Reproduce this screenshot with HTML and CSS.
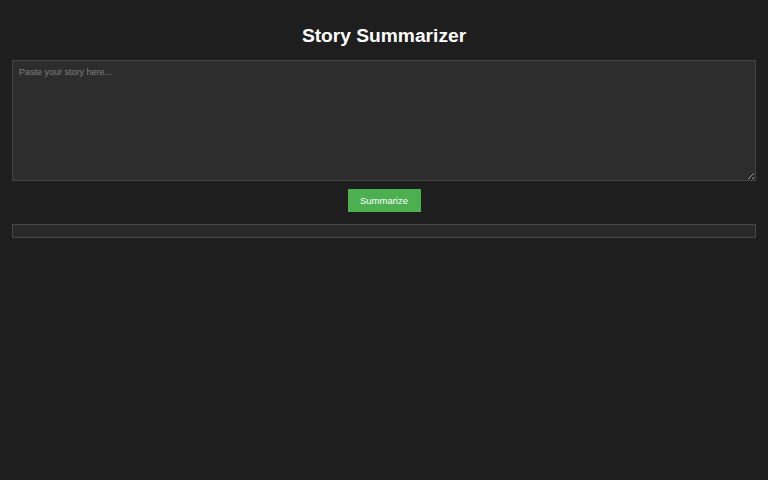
FILE: index.html
```html
<!DOCTYPE html>
<html>
<head>
<meta charset="utf-8">
<link rel="stylesheet" href="styles.css">
</head>
<body>
<div class="page">
  <h1 class="title">Story Summarizer</h1>
  <textarea class="story" placeholder="Paste your story here..."></textarea>
  <div class="actions"><button class="btn">Summarize</button></div>
  <div class="output"></div>
</div>
</body>
</html>
```
FILE: styles.css
```css
html, body {
  margin: 0;
  padding: 0;
  background: #1e1e1e;
  color: #ffffff;
  font-family: "Liberation Sans", Arial, sans-serif;
}
.page {
  padding: 25px 12px 12px;
  display: flex;
  flex-direction: column;
}
.title {
  margin: 0 0 13px;
  font-size: 19.2px;
  line-height: 22px;
  font-weight: bold;
  text-align: center;
  color: #ffffff;
}
.story {
  box-sizing: border-box;
  width: 100%;
  height: 121px;
  margin: 0;
  padding: 6px;
  background: #2d2d2d;
  border: 1px solid #444444;
  color: #dddddd;
  font-family: "Liberation Sans", Arial, sans-serif;
  font-size: 9px;
  resize: vertical;
  display: block;
}
.story::placeholder {
  color: #808080;
}
.actions {
  display: flex;
  justify-content: center;
  margin-top: 8px;
}
.btn {
  box-sizing: border-box;
  height: 23px;
  width: 73px;
  padding: 0;
  border: none;
  background: #4caf50;
  color: #ffffff;
  font-family: "Liberation Sans", Arial, sans-serif;
  font-size: 9.5px;
}
.output {
  margin-top: 12px;
  box-sizing: border-box;
  height: 14px;
  background: #2a2a2a;
  border: 1px solid #484848;
}
```
